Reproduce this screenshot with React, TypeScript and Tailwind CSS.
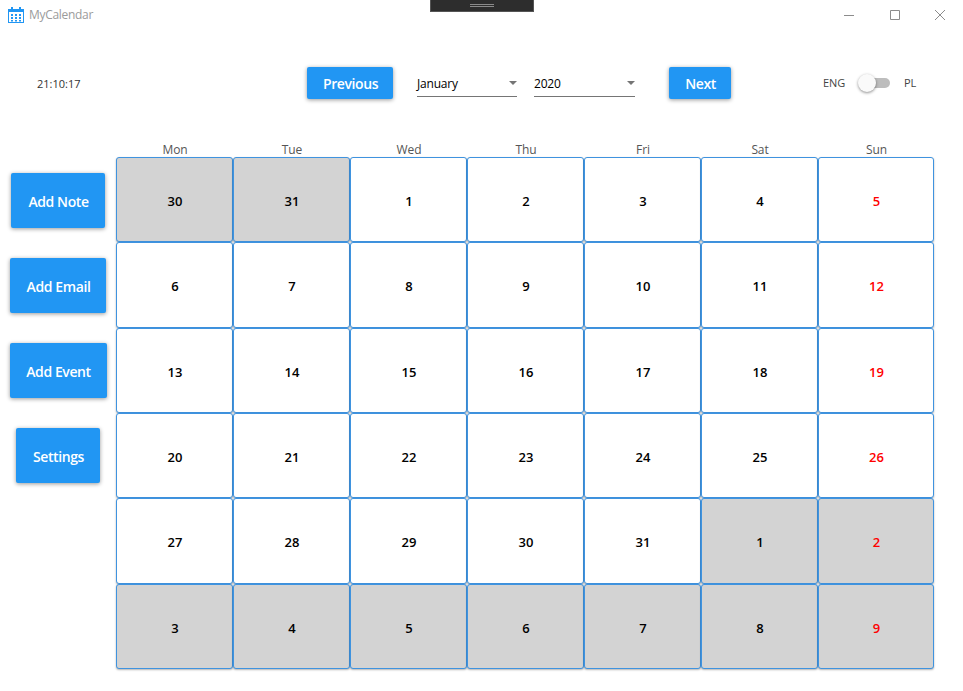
import React from "react";

const days = ["Mon", "Tue", "Wed", "Thu", "Fri", "Sat", "Sun"];
const cells: number[] = [
  30, 31, 1, 2, 3, 4, 5, 6, 7, 8, 9, 10, 11, 12, 13, 14, 15, 16, 17, 18, 19, 20, 21, 22, 23, 24, 25, 26, 27, 28, 29, 30, 31, 1, 2, 3, 4, 5, 6, 7, 8, 9,
];

function Btn({ label, className }: { label: string; className: string }) {
  return (
    <button className={`bg-[#2196f3] text-white font-semibold text-[14px] tracking-[-0.4px] rounded-[2px] shadow-[0_1px_4px_rgba(0,0,0,0.4)] flex items-center justify-center pl-[1px] ${className}`}>
      {label}
    </button>
  );
}

function Select({ label, className }: { label: string; className: string }) {
  return (
    <div className={`h-[26px] border-b border-[#757575] flex items-center justify-between text-[12px] tracking-[-0.2px] text-black ${className}`}>
      <span>{label}</span>
      <span className="w-0 h-0 border-l-[4px] border-r-[4px] border-t-[4px] border-l-transparent border-r-transparent border-t-[#757575] mb-[2px]" />
    </div>
  );
}

export default function App() {
  return (
    <div
      className="relative w-[963px] h-[691px] bg-white overflow-hidden flex flex-col"
      style={{ fontFamily: '"Open Sans", "Noto Sans", sans-serif' }}
    >
      <div className="absolute left-[430px] top-0 w-[104px] h-[12px] bg-[#2d2d2d] border-b border-x border-[#555] flex items-start justify-center">
        <div className="w-[24px] h-[3px] mt-[4px] border-y border-[#8a8a8a]" />
      </div>

      <div className="h-[30px] flex items-center shrink-0">
        <svg className="ml-[8px]" width="16" height="16" viewBox="0 0 16 16">
          <path fill="#2196f3" d="M0 2h3V0h2v2h6V0h2v2h3v14H0z" />
          <path fill="#fff" d="M1 5h14v10H1z" />
          <path fill="#2196f3" d="M3 7h2v2H3zM7 7h2v2H7zM11 7h2v2h-2zM3 10h2v2H3zM7 10h2v2H7zM11 10h2v2h-2zM3 13h2v1.5H3zM7 13h2v1.5H7zM11 13h2v1.5h-2z" />
        </svg>
        <span className="ml-[5px] text-[12px] tracking-[-0.3px] text-[#9b9b9b]">MyCalendar</span>
        <div className="ml-auto flex items-center">
          <svg width="12" height="12" viewBox="0 0 12 12" className="mr-[34px]"><path d="M1 6.5h10" stroke="#8c8c8c" fill="none" /></svg>
          <svg width="12" height="12" viewBox="0 0 12 12" className="mr-[33px]"><path d="M1.5 1.5h9v9h-9z" stroke="#8c8c8c" fill="none" /></svg>
          <svg width="12" height="12" viewBox="0 0 12 12" className="mr-[17px]"><path d="M1 1l10 10M11 1L1 11" stroke="#8c8c8c" fill="none" /></svg>
        </div>
      </div>

      <div className="h-[32px] mt-[37px] shrink-0 flex items-center">
        <span className="ml-[37px] w-[270px] text-[11px] pt-[2px] text-[#333]">21:10:17</span>
        <Btn label="Previous" className="w-[86px] h-[32px]" />
        <Select label="January" className="ml-[24px] w-[100px] mt-[2px]" />
        <Select label="2020" className="ml-[17px] w-[101px] mt-[2px]" />
        <Btn label="Next" className="ml-[34px] w-[62px] h-[32px]" />
        <span className="ml-[92px] w-[24px] text-[11px] text-[#444] tracking-[-0.1px]">ENG</span>
        <div className="relative ml-[11px] w-[32px] h-[18px] flex items-center">
          <div className="ml-[2px] w-[30px] h-[10px] rounded-full bg-[#bdbdbd]" />
          <div className="absolute left-0 top-0 w-[18px] h-[18px] rounded-full bg-[#fafafa] shadow-[0_1px_3px_rgba(0,0,0,0.45)]" />
        </div>
        <span className="ml-[14px] text-[11px] text-[#444]">PL</span>
      </div>

      <div className="flex mt-[44px]">
        <div className="w-[116px] shrink-0 pt-[15px] flex flex-col items-center">
          {[
            ["Add Note", "w-[94px]"],
            ["Add Email", "w-[96px]"],
            ["Add Event", "w-[97px]"],
            ["Settings", "w-[84px]"],
          ].map(([label, w]) => (
            <div key={label} className="h-[85px] flex items-center justify-center">
              <Btn label={label} className={`${w} h-[55px] pt-[1px]`} />
            </div>
          ))}
        </div>
        <div className="w-[818px]">
          <div className="grid grid-cols-[repeat(6,117px)_116px] h-[14px]">
            {days.map((d) => (
              <div key={d} className="text-center text-[12px] tracking-[-0.1px] pl-[1px] leading-[14px] text-[#555]">
                {d}
              </div>
            ))}
          </div>
          <div className="grid grid-cols-[repeat(6,117px)_116px] auto-rows-[85.33px]">
            {cells.map((n, i) => {
              const grey = i < 2 || i >= 33;
              const red = i % 7 === 6;
              return (
                <div
                  key={i}
                  className={`flex items-center justify-center pl-[1px] pt-[4px] border border-[#3f93df] rounded-[3px] text-[13px] font-semibold shadow-[0_1px_2px_rgba(0,0,0,0.3)] ${grey ? "bg-[#d3d3d3]" : "bg-white"} ${red ? "text-[#ff0000]" : "text-black"}`}
                >
                  {n}
                </div>
              );
            })}
          </div>
        </div>
      </div>
    </div>
  );
}
